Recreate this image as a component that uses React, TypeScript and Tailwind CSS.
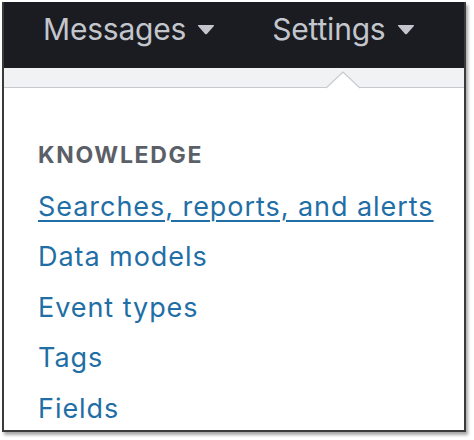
import React from 'react';

const links = [
  { label: 'Searches, reports, and alerts', underline: true },
  { label: 'Data models' },
  { label: 'Event types' },
  { label: 'Tags' },
  { label: 'Fields' },
];

function Caret() {
  return (
    <svg viewBox="0 0 18 11" className="w-[18px] h-[11px] fill-[#c3c7cd]">
      <path d="M1.6 1 H16.4 Q17.6 1 16.9 2.1 L9.9 9.9 Q9 10.8 8.1 9.9 L1.1 2.1 Q0.4 1 1.6 1 Z" />
    </svg>
  );
}

export default function App() {
  return (
    <div className="w-[474px] h-[440px] bg-white pt-[2px] pl-[2px]" style={{ fontFamily: 'Inter, "Liberation Sans", sans-serif' }}>
      <div className="w-[464px] h-[430px] border-2 border-t-0 border-[#3b3b3b] shadow-[2px_3px_3px_rgba(0,0,0,0.35)] flex flex-col overflow-hidden">
        {/* Top bar */}
        <div className="shrink-0 h-[66px] bg-[#1a1c21] flex items-start pt-[10px] pl-[39px] gap-[57px]">
          <div className="flex items-center gap-[11px] text-[#c3c7cd] text-[30px] leading-[34px] tracking-[-0.2px]">
            Messages <Caret />
          </div>
          <div className="flex items-center gap-[11px] text-[#c3c7cd] text-[30px] leading-[34px] tracking-[-0.2px]">
            Settings <Caret />
          </div>
        </div>

        {/* Dropdown strip with pointer */}
        <div className="shrink-0 relative h-[20px] bg-[#f1f2f4] border-b border-[#c6c9ce]">
          <svg viewBox="0 0 34 18" className="absolute left-[322px] top-[3px] w-[34px] h-[18px]">
            <path d="M0 17 L17 1 L34 17" fill="#ffffff" stroke="#c6c9ce" strokeWidth="1.2" />
          </svg>
        </div>

        {/* Menu body */}
        <div className="flex-1 bg-white pl-[34px] pt-[54px]">
          <div className="text-[#5b6068] text-[23px] font-bold leading-[26px] tracking-[1.7px]">KNOWLEDGE</div>
          <ul className="mt-[24px] flex flex-col gap-[20.4px]">
            {links.map(l => (
              <li key={l.label} className="text-[27px] leading-[30px] tracking-[0.95px]">
                <a
                  href="#"
                  className={`text-[#1f6fa6] ${l.underline ? 'underline decoration-[1.5px] underline-offset-[4px]' : 'no-underline'}`}
                >
                  {l.label}
                </a>
              </li>
            ))}
          </ul>
        </div>
      </div>
    </div>
  );
}
